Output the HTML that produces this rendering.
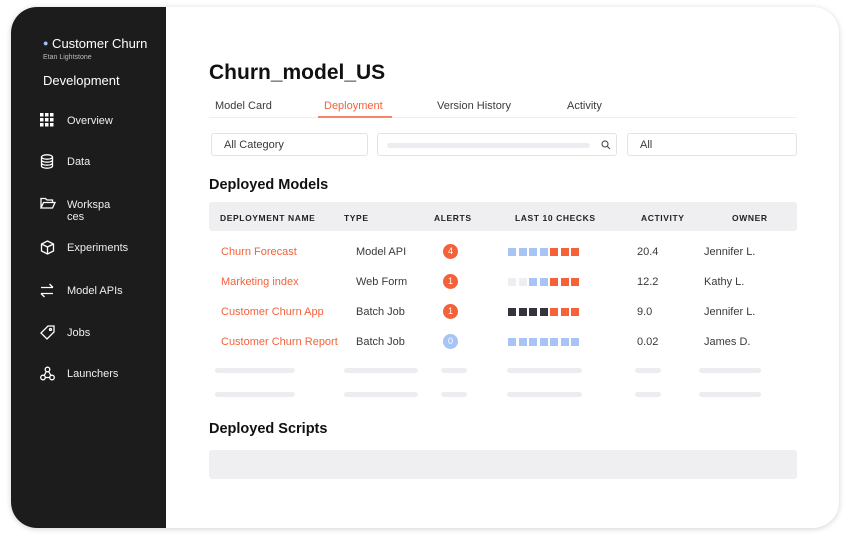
<!DOCTYPE html>
<html><head><meta charset="utf-8"><style>
*{margin:0;padding:0;box-sizing:border-box}
body{width:850px;height:543px;background:#fff;font-family:"Liberation Sans",sans-serif;position:relative;overflow:hidden}
.card{position:absolute;left:11px;top:7px;width:828px;height:521px;border-radius:26px;background:#fff;box-shadow:0 1px 6px rgba(0,0,0,.18);overflow:hidden}
.side{position:absolute;left:0;top:0;width:155px;height:521px;background:#1c1c1c;color:#fff}
.a{position:absolute;white-space:nowrap}
.nav{position:absolute;left:29px;font-size:11px;color:#eee}
.nav svg{position:absolute;left:0;top:-2px}
.nav span{position:absolute;left:27px;top:0;line-height:12px;white-space:nowrap}
.main .a{font-size:11px;color:#3a3a3a}
.o{color:#f4623a!important}
.th{font-size:8.5px!important;font-weight:bold;color:#222!important;letter-spacing:.6px}
.badge{position:absolute;width:15px;height:15px;border-radius:50%;background:#f4623a;color:#fff;font-size:9px;text-align:center;line-height:15px}
.sq{position:absolute;display:flex;gap:2.5px}
.sq i{display:block;width:8px;height:8px}
.b{background:#a7c4f4}.r{background:#f4623a}.g{background:#eeeef2}.d{background:#34343c}
.sk{position:absolute;height:5px;border-radius:3px;background:#ededf1}
.box{position:absolute;border:1px solid #e3e3e6;border-radius:3px;height:23px}
</style></head><body>
<div class="card">
<div class="side">
 <div class="a" style="left:32px;top:29px;font-size:13px"><span style="color:#9ec0f5;font-size:9px;vertical-align:2px">●</span> Customer Churn</div>
 <div class="a" style="left:32px;top:47px;font-size:7px;color:#bbb">Etan Lightstone</div>
 <div class="a" style="left:32px;top:66px;font-size:13px">Development</div>
 <div class="nav" style="top:108px"><svg width="14" height="14" viewBox="0 0 14 14" fill="#fff"><rect x="0" y="0" width="3.5" height="3.5"/><rect x="5" y="0" width="3.5" height="3.5"/><rect x="10" y="0" width="3.5" height="3.5"/><rect x="0" y="5" width="3.5" height="3.5"/><rect x="5" y="5" width="3.5" height="3.5"/><rect x="10" y="5" width="3.5" height="3.5"/><rect x="0" y="10" width="3.5" height="3.5"/><rect x="5" y="10" width="3.5" height="3.5"/><rect x="10" y="10" width="3.5" height="3.5"/></svg><span>Overview</span></div>
 <div class="nav" style="top:149px"><svg width="14" height="15" viewBox="0 0 14 15" fill="none" stroke="#fff" stroke-width="1.3"><ellipse cx="7" cy="3" rx="5.5" ry="2.2"/><path d="M1.5 3v9c0 1.2 2.5 2.2 5.5 2.2s5.5-1 5.5-2.2V3M1.5 6c0 1.2 2.5 2.2 5.5 2.2S12.5 7.2 12.5 6M1.5 9c0 1.2 2.5 2.2 5.5 2.2s5.5-1 5.5-2.2"/></svg><span>Data</span></div>
 <div class="nav" style="top:192px"><svg width="16" height="13" viewBox="0 0 16 13" fill="none" stroke="#fff" stroke-width="1.3"><path d="M1 11V1.5h4.5l1.5 1.5h5.5v2.5M1 11l2.5-5.5H15L12.5 11z"/></svg><span>Workspa<br>ces</span></div>
 <div class="nav" style="top:235px"><svg width="15" height="15" viewBox="0 0 15 15" fill="none" stroke="#fff" stroke-width="1.3"><path d="M7.5 1l6 3v7l-6 3-6-3V4zM1.5 4l6 3 6-3M7.5 7v7"/></svg><span>Experiments</span></div>
 <div class="nav" style="top:278px"><svg width="14" height="15" viewBox="0 0 14 15" fill="none" stroke="#fff" stroke-width="1.3"><path d="M1 4.5h12M9.5 1l3.5 3.5M13 10.5H1M4.5 14L1 10.5"/></svg><span>Model APIs</span></div>
 <div class="nav" style="top:320px"><svg width="15" height="15" viewBox="0 0 15 15" fill="none" stroke="#fff" stroke-width="1.3"><path d="M8 1h6v6l-7 7-6-6z"/><circle cx="10.5" cy="4.5" r="1"/></svg><span>Jobs</span></div>
 <div class="nav" style="top:361px"><svg width="15" height="15" viewBox="0 0 15 15" fill="none" stroke="#fff" stroke-width="1.3"><circle cx="7.5" cy="3.5" r="2.3"/><circle cx="3" cy="11.5" r="2.3"/><circle cx="12" cy="11.5" r="2.3"/><path d="M6.3 5.5L4.2 9.5M8.7 5.5l2.1 4M5.3 11.5h4.4"/></svg><span>Launchers</span></div>
</div>
</div>
<div class="main">
 <div class="a" style="left:209px;top:61px;font-size:21px;font-weight:bold;color:#111">Churn_model_US</div>
 <div class="a" style="left:215px;top:100px">Model Card</div>
 <div class="a o" style="left:324px;top:100px">Deployment</div>
 <div class="a" style="left:437px;top:100px">Version History</div>
 <div class="a" style="left:567px;top:100px">Activity</div>
 <div style="position:absolute;left:209px;top:117px;width:588px;height:1px;background:#eee"></div>
 <div style="position:absolute;left:318px;top:116px;width:74px;height:2px;background:#f4846a"></div>
 <div class="box" style="left:211px;top:133px;width:157px"></div>
 <div class="a" style="left:224px;top:139px">All Category</div>
 <div class="box" style="left:377px;top:133px;width:240px"></div>
 <div class="sk" style="left:387px;top:143px;width:203px;height:5px"></div>
 <svg style="position:absolute;left:601px;top:140px" width="10" height="10" viewBox="0 0 10 10" fill="none" stroke="#555" stroke-width="1.2"><circle cx="4" cy="4" r="3"/><path d="M6.3 6.3L9 9"/></svg>
 <div class="box" style="left:627px;top:133px;width:170px"></div>
 <div class="a" style="left:640px;top:139px">All</div>
 <div class="a" style="left:209px;top:177px;font-size:14.5px;font-weight:bold;color:#111">Deployed Models</div>
 <div style="position:absolute;left:209px;top:202px;width:588px;height:29px;background:#efeff2;border-radius:3px"></div>
 <div class="a th" style="left:220px;top:213px">DEPLOYMENT NAME</div>
 <div class="a th" style="left:344px;top:213px">TYPE</div>
 <div class="a th" style="left:434px;top:213px">ALERTS</div>
 <div class="a th" style="left:515px;top:213px">LAST 10 CHECKS</div>
 <div class="a th" style="left:641px;top:213px">ACTIVITY</div>
 <div class="a th" style="left:732px;top:213px">OWNER</div>

 <div class="a o" style="left:221px;top:246px">Churn Forecast</div>
 <div class="a" style="left:356px;top:246px">Model API</div>
 <div class="badge" style="left:443px;top:244px">4</div>
 <div class="sq" style="left:508px;top:248px"><i class="b"></i><i class="b"></i><i class="b"></i><i class="b"></i><i class="r"></i><i class="r"></i><i class="r"></i></div>
 <div class="a" style="left:637px;top:246px">20.4</div>
 <div class="a" style="left:704px;top:246px">Jennifer L.</div>

 <div class="a o" style="left:221px;top:276px">Marketing index</div>
 <div class="a" style="left:356px;top:276px">Web Form</div>
 <div class="badge" style="left:443px;top:274px">1</div>
 <div class="sq" style="left:508px;top:278px"><i class="g"></i><i class="g"></i><i class="b"></i><i class="b"></i><i class="r"></i><i class="r"></i><i class="r"></i></div>
 <div class="a" style="left:637px;top:276px">12.2</div>
 <div class="a" style="left:704px;top:276px">Kathy L.</div>

 <div class="a o" style="left:221px;top:306px">Customer Churn App</div>
 <div class="a" style="left:356px;top:306px">Batch Job</div>
 <div class="badge" style="left:443px;top:304px">1</div>
 <div class="sq" style="left:508px;top:308px"><i class="d"></i><i class="d"></i><i class="d"></i><i class="d"></i><i class="r"></i><i class="r"></i><i class="r"></i></div>
 <div class="a" style="left:637px;top:306px">9.0</div>
 <div class="a" style="left:704px;top:306px">Jennifer L.</div>

 <div class="a o" style="left:221px;top:336px">Customer Churn Report</div>
 <div class="a" style="left:356px;top:336px">Batch Job</div>
 <div class="badge" style="left:443px;top:334px;background:#a7c4f4">0</div>
 <div class="sq" style="left:508px;top:338px"><i class="b"></i><i class="b"></i><i class="b"></i><i class="b"></i><i class="b"></i><i class="b"></i><i class="b"></i></div>
 <div class="a" style="left:637px;top:336px">0.02</div>
 <div class="a" style="left:704px;top:336px">James D.</div>

 <div class="sk" style="left:215px;top:368px;width:80px"></div><div class="sk" style="left:344px;top:368px;width:74px"></div><div class="sk" style="left:441px;top:368px;width:26px"></div><div class="sk" style="left:507px;top:368px;width:75px"></div><div class="sk" style="left:635px;top:368px;width:26px"></div><div class="sk" style="left:699px;top:368px;width:62px"></div>
 <div class="sk" style="left:215px;top:392px;width:80px"></div><div class="sk" style="left:344px;top:392px;width:74px"></div><div class="sk" style="left:441px;top:392px;width:26px"></div><div class="sk" style="left:507px;top:392px;width:75px"></div><div class="sk" style="left:635px;top:392px;width:26px"></div><div class="sk" style="left:699px;top:392px;width:62px"></div>

 <div class="a" style="left:209px;top:421px;font-size:14.5px;font-weight:bold;color:#111">Deployed Scripts</div>
 <div style="position:absolute;left:209px;top:450px;width:588px;height:29px;background:#efeff2;border-radius:3px"></div>
</div>
</body></html>
